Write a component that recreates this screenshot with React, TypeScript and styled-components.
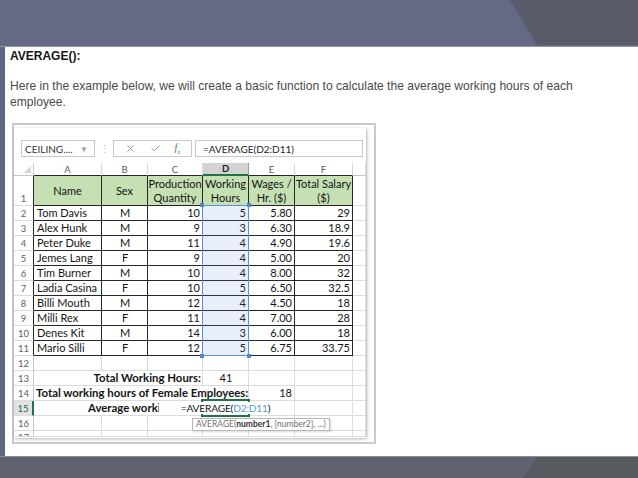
import React from 'react';
import styled, { createGlobalStyle } from 'styled-components';
import { X, Check } from 'lucide-react';

const Global = createGlobalStyle`
  *, *::before, *::after { box-sizing: border-box; }
  html, body { margin: 0; padding: 0; }
  body { width: 638px; height: 478px; overflow: hidden; background: #646a85; }
`;

const Slide = styled.div`
  width: 638px;
  height: 478px;
  display: grid;
  grid-template-rows: 47px 409px 22px;
  background: #646a85;
  overflow: hidden;
`;

const TopBand = styled.div`
  position: relative;
  background: #646a86;
  border-bottom: 1px solid #8f94a8;
  &::after {
    content: '';
    position: absolute;
    inset: 0 0 1px 0;
    background: #585b69;
    clip-path: polygon(510px 0, 100% 0, 100% 100%, 537px 100%);
  }
`;

const Middle = styled.div`
  display: flex;
  padding-left: 5px;
  background: #5f6582;
`;

const Panel = styled.div`
  flex: 1;
  background: #ffffff;
  padding: 2px 5px 0;
  font-family: 'Liberation Sans', Arial, sans-serif;
`;

const BottomBand = styled.div`
  position: relative;
  background: #60636f;
  border-top: 1px solid #8b8e9b;
  &::after {
    content: '';
    position: absolute;
    inset: 0;
    background: #56595e;
    clip-path: polygon(537px 0, 100% 0, 100% 100%, 523px 100%);
  }
`;

const Title = styled.h1`
  margin: 0;
  font-size: 12px;
  line-height: 14px;
  font-weight: 700;
  color: #161616;
`;

const Para = styled.p`
  margin: 15px 0 0;
  width: 600px;
  font-size: 12.1px;
  line-height: 16px;
  color: #4a4a4a;
`;

const Frame = styled.div`
  margin: 13px 0 0 2px;
  width: 364px;
  height: 321px;
  border: 2px solid #c9c9c9;
  padding: 3px 8px 4px 0;
  background: #fff;
`;

const Excel = styled.div`
  height: 100%;
  background: #fff;
  box-shadow: 1px 1px 3px rgba(0, 0, 0, 0.3);
  padding-top: 12px;
  display: flex;
  flex-direction: column;
  gap: 6px;
  overflow: hidden;
  font-family: Lato, 'Open Sans', sans-serif;
  color: #141414;
`;

const FormulaBar = styled.div`
  display: flex;
  align-items: center;
  height: 17px;
  padding-left: 7px;
  padding-right: 3px;
  font-size: 10px;
  color: #333;
`;

const Box = styled.div<{ $w?: number }>`
  height: 17px;
  border: 1px solid #c9c9c9;
  display: flex;
  align-items: center;
  ${p => (p.$w ? `width: ${p.$w}px;` : 'flex: 1;')}
`;

const NameBox = styled(Box)`
  justify-content: space-between;
  padding: 0 6px 0 3px;
`;

const Caret = styled.span`
  color: #9a9a9a;
  font-size: 8px;
`;

const Dots = styled.div`
  width: 18px;
  text-align: center;
  color: #b8b8b8;
  font-size: 11px;
`;

const IconBox = styled(Box)`
  justify-content: space-around;
  padding: 0 4px;
  color: #7a7a7a;
  margin-right: 3px;
`;

const Fx = styled.span`
  font-family: 'Liberation Serif', serif;
  font-style: italic;
  font-size: 10px;
  color: #6a6a6a;
  sub { font-size: 6px; }
`;

const FormulaBox = styled(Box)`
  padding-left: 7px;
  font-size: 10px;
  color: #222;
`;

const gridTemplate = `
  display: grid;
  grid-template-columns: 20px 68px 46px 55px 46px 46px 58px 13px;
  grid-template-rows: 13px 30px repeat(15, 15px) 6px;
`;

const SheetWrap = styled.div`
  position: relative;
  overflow: hidden;
`;

const Sheet = styled.div`
  ${gridTemplate}
  font-size: 11px;
`;

const OverlayLayer = styled.div`
  ${gridTemplate}
  position: absolute;
  inset: 0;
  font-size: 11px;
  pointer-events: none;
`;

const Corner = styled.div`
  border-right: 1px solid #d0d0d0;
  border-bottom: 1px solid #c6c6c6;
  display: flex;
  align-items: flex-end;
  justify-content: flex-end;
  padding: 0 2px 2px 0;
  &::after {
    content: '';
    width: 0;
    height: 0;
    border-left: 7px solid transparent;
    border-bottom: 7px solid #d6d6d6;
  }
`;

const ColHead = styled.div<{ $dark?: boolean; $sel?: boolean }>`
  display: flex;
  align-items: center;
  justify-content: center;
  font-size: 9.5px;
  color: ${p => (p.$sel ? '#1e1e1e' : '#5a5a5a')};
  font-weight: ${p => (p.$sel ? 700 : 400)};
  background: ${p => (p.$sel ? '#d3d3d3' : '#fff')};
  border-right: 1px solid ${p => (p.$sel ? '#9d9d9d' : '#d8d8d8')};
  border-bottom: ${p => (p.$sel ? '2px solid #217346' : `1px solid ${p.$dark ? '#262626' : '#c6c6c6'}`)};
`;

const RowHead = styled.div<{ $dark?: boolean; $active?: boolean }>`
  display: flex;
  align-items: flex-end;
  justify-content: center;
  overflow: hidden;
  font-size: 9.5px;
  line-height: 13px;
  color: ${p => (p.$active ? '#217346' : '#606060')};
  background: ${p => (p.$active ? '#e2e2e2' : '#fff')};
  border-right: ${p => (p.$active ? '2px solid #217346' : `1px solid ${p.$dark ? '#262626' : '#c6c6c6'}`)};
  border-bottom: 1px solid #dcdcdc;
`;

const RowHeadTop = styled(RowHead)`
  align-items: flex-start;
`;

type Align = 'left' | 'center' | 'right';
const justify: Record<Align, string> = { left: 'flex-start', center: 'center', right: 'flex-end' };

const Cell = styled.div<{ $align?: Align; $dark?: boolean; $bold?: boolean; $span?: number; $pad?: number }>`
  grid-column: span ${p => p.$span ?? 1};
  display: flex;
  align-items: flex-end;
  justify-content: ${p => justify[p.$align ?? 'left']};
  padding: 0 ${p => p.$pad ?? 2}px 0 ${p => p.$pad ?? 3}px;
  border-right: 1px solid ${p => (p.$dark ? '#262626' : '#dcdcdc')};
  border-bottom: 1px solid ${p => (p.$dark ? '#262626' : '#dcdcdc')};
  font-weight: ${p => (p.$bold ? 700 : 400)};
  font-size: ${p => (p.$bold ? '11.4px' : '11px')};
  white-space: nowrap;
  line-height: 14px;
  min-width: 0;
`;

const HeadCell = styled.div`
  display: flex;
  align-items: center;
  justify-content: center;
  text-align: center;
  background: #c5e0b3;
  border-right: 1px solid #262626;
  border-bottom: 1px solid #262626;
  line-height: 14px;
  white-space: nowrap;
`;

const ClipCell = styled(Cell)`
  padding-left: 54px;
`;

const Clip = styled.span<{ $w: number }>`
  display: inline-block;
  width: ${p => p.$w}px;
  overflow: hidden;
`;

const Selection = styled.div`
  grid-column: 5;
  grid-row: 3 / 13;
  margin: -1px 0 0 -1px;
  border: 1px solid #5b93d6;
  background: rgba(90, 145, 220, 0.14);
  position: relative;
`;

const Handle = styled.span<{ $top?: boolean; $left?: boolean }>`
  position: absolute;
  width: 4px;
  height: 4px;
  background: #4f86c8;
  ${p => (p.$top ? 'top: -3px;' : 'bottom: -3px;')}
  ${p => (p.$left ? 'left: -3px;' : 'right: -3px;')}
`;

const ActiveCell = styled.div`
  grid-column: 5;
  grid-row: 16;
  margin: -2px -1px -1px -2px;
  border: 2px solid #217346;
  display: flex;
  align-items: center;
  justify-content: center;
  position: relative;
  white-space: nowrap;
`;

const EditText = styled.span`
  background: #fff;
  line-height: 12px;
  padding: 0 1px;
  font-size: 10.2px;
  letter-spacing: -0.2px;
  color: #141414;
`;

const Ref = styled.span`
  color: #5b9bd5;
`;

const Tip = styled.div`
  position: absolute;
  top: calc(100% + 3px);
  left: -11px;
  height: 13px;
  padding: 0 3px;
  border: 1px solid #b8b8b8;
  background: #fff;
  box-shadow: 1px 1px 2px rgba(0, 0, 0, 0.15);
  font-size: 8.5px;
  line-height: 11px;
  color: #707070;
  b { color: #333; font-weight: 700; }
`;

const rows: [string, string, string, string, string, string][] = [
  ['Tom Davis', 'M', '10', '5', '5.80', '29'],
  ['Alex Hunk', 'M', '9', '3', '6.30', '18.9'],
  ['Peter Duke', 'M', '11', '4', '4.90', '19.6'],
  ['Jemes Lang', 'F', '9', '4', '5.00', '20'],
  ['Tim Burner', 'M', '10', '4', '8.00', '32'],
  ['Ladia Casina', 'F', '10', '5', '6.50', '32.5'],
  ['Billi Mouth', 'M', '12', '4', '4.50', '18'],
  ['Milli Rex', 'F', '11', '4', '7.00', '28'],
  ['Denes Kit', 'M', '14', '3', '6.00', '18'],
  ['Mario Silli', 'F', '12', '5', '6.75', '33.75'],
];

const aligns: Align[] = ['left', 'center', 'right', 'right', 'right', 'right'];
const letters = ['A', 'B', 'C', 'D', 'E', 'F'];

const Empty = ({ n }: { n: number }) => (
  <>
    {Array.from({ length: n }).map((_, i) => (
      <Cell key={i} />
    ))}
  </>
);

export default function App() {
  return (
    <>
      <Global />
      <Slide>
        <TopBand />
        <Middle>
          <Panel>
            <Title>AVERAGE():</Title>
            <Para>
              Here in the example below, we will create a basic function to calculate the average working hours of each
              employee.
            </Para>
            <Frame>
              <Excel>
                <FormulaBar>
                  <NameBox $w={74}>
                    <span>CEILING....</span>
                    <Caret>▼</Caret>
                  </NameBox>
                  <Dots>⋮</Dots>
                  <IconBox $w={79}>
                    <X size={11} strokeWidth={1.6} />
                    <Check size={11} strokeWidth={1.6} />
                    <Fx>
                      f<sub>x</sub>
                    </Fx>
                  </IconBox>
                  <FormulaBox>=AVERAGE(D2:D11)</FormulaBox>
                </FormulaBar>
                <SheetWrap>
                  <Sheet>
                    <Corner />
                    {letters.map(l => (
                      <ColHead key={l} $dark $sel={l === 'D'}>
                        {l}
                      </ColHead>
                    ))}
                    <ColHead />

                    <RowHead $dark>1</RowHead>
                    <HeadCell>Name</HeadCell>
                    <HeadCell>Sex</HeadCell>
                    <HeadCell>
                      Production
                      <br />
                      Quantity
                    </HeadCell>
                    <HeadCell>
                      Working
                      <br />
                      Hours
                    </HeadCell>
                    <HeadCell>
                      Wages /
                      <br />
                      Hr. ($)
                    </HeadCell>
                    <HeadCell>
                      Total Salary
                      <br />
                      ($)
                    </HeadCell>
                    <Cell />

                    {rows.map((r, i) => (
                      <React.Fragment key={r[0]}>
                        <RowHead $dark>{i + 2}</RowHead>
                        {r.map((v, j) => (
                          <Cell key={j} $dark $align={aligns[j]}>
                            {v}
                          </Cell>
                        ))}
                        <Cell />
                      </React.Fragment>
                    ))}

                    <RowHead>12</RowHead>
                    <Empty n={7} />

                    <RowHead>13</RowHead>
                    <Cell $span={3} $align="right" $bold $pad={1}>
                      Total Working Hours:
                    </Cell>
                    <Cell $align="center">41</Cell>
                    <Empty n={3} />

                    <RowHead>14</RowHead>
                    <Cell $span={4} $bold $pad={2}>
                      Total working hours of Female Employees:
                    </Cell>
                    <Cell $align="right">18</Cell>
                    <Empty n={2} />

                    <RowHead $active>15</RowHead>
                    <ClipCell $span={3} $bold>
                      <Clip $w={71}>Average working Hours:</Clip>
                    </ClipCell>
                    <Empty n={4} />

                    <RowHead>16</RowHead>
                    <Empty n={7} />

                    <RowHeadTop>17</RowHeadTop>
                    <Empty n={7} />
                  </Sheet>

                  <OverlayLayer>
                    <Selection>
                      <Handle $top $left />
                      <Handle $top />
                      <Handle $left />
                      <Handle />
                    </Selection>
                    <ActiveCell>
                      <EditText>
                        =AVERAGE(<Ref>D2:D11</Ref>)
                      </EditText>
                      <Tip>
                        AVERAGE(<b>number1</b>, [number2], ...)
                      </Tip>
                    </ActiveCell>
                  </OverlayLayer>
                </SheetWrap>
              </Excel>
            </Frame>
          </Panel>
        </Middle>
        <BottomBand />
      </Slide>
    </>
  );
}
